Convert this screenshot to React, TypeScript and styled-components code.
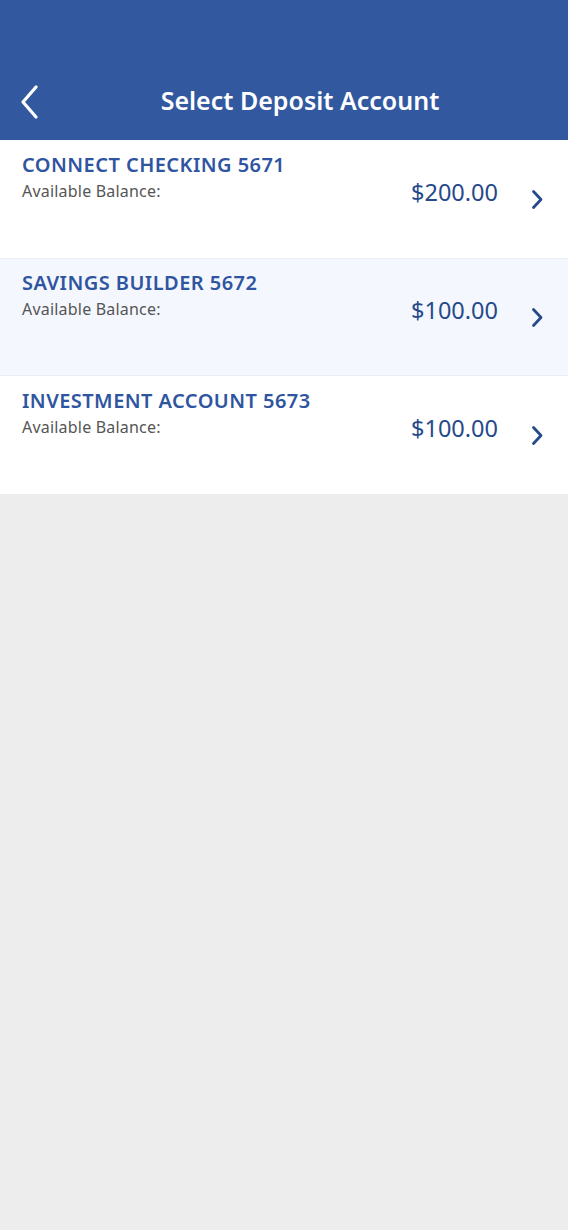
import styled, { createGlobalStyle } from 'styled-components';

const GlobalStyle = createGlobalStyle`
  html, body {
    margin: 0;
    padding: 0;
    background: #ededed;
    font-family: "Noto Sans", "Open Sans", sans-serif;
  }
`;

const Page = styled.div`
  min-height: 1230px;
  background: #ededed;
`;

const Header = styled.header`
  height: 140px;
  background: #3259a0;
  display: flex;
  align-items: flex-end;
  justify-content: center;
  position: relative;
  box-sizing: border-box;
  padding: 0 0 24px 32px;
`;

const BackButton = styled.button`
  position: absolute;
  left: 14px;
  bottom: 18px;
  width: 32px;
  height: 40px;
  background: none;
  border: none;
  padding: 0;
  display: flex;
  align-items: center;
  justify-content: center;
  cursor: pointer;
`;

const Title = styled.h1`
  margin: 0;
  color: #ffffff;
  font-size: 25px;
  font-weight: 600;
  line-height: 32px;
`;

const List = styled.ul`
  list-style: none;
  margin: 0;
  padding: 0;
`;

const Row = styled.li<{ $shaded: boolean }>`
  height: 118px;
  box-sizing: border-box;
  background: ${(p) => (p.$shaded ? '#f4f8fe' : '#ffffff')};
  border-top: 1px solid ${(p) => (p.$shaded ? '#eaeef4' : 'transparent')};
  border-bottom: 1px solid ${(p) => (p.$shaded ? '#eaeef4' : 'transparent')};
  display: flex;
  align-items: flex-start;
  padding: 10px 24px 0 22px;
  cursor: pointer;
`;

const Info = styled.div`
  flex: 1;
  display: flex;
  flex-direction: column;
`;

const Name = styled.div`
  color: #2f55a0;
  font-size: 20px;
  font-weight: 600;
  letter-spacing: 0.45px;
  line-height: 28px;
`;

const Label = styled.div`
  color: #555555;
  font-size: 16px;
  font-weight: 400;
  letter-spacing: 0.2px;
  line-height: 20px;
  margin-top: 2px;
`;

const Amount = styled.div`
  color: #26498a;
  font-size: 23.5px;
  line-height: 30px;
  margin-top: 26px;
`;

const Chevron = styled.span`
  display: flex;
  margin: 38px 0 0 33px;
`;

const accounts = [
  { name: 'CONNECT CHECKING 5671', balance: '$200.00' },
  { name: 'SAVINGS BUILDER 5672', balance: '$100.00' },
  { name: 'INVESTMENT ACCOUNT 5673', balance: '$100.00' },
];

export default function App() {
  return (
    <Page>
      <GlobalStyle />
      <Header>
        <BackButton aria-label="Back">
          <svg width="20" height="34" viewBox="0 0 20 34">
            <path d="M16 2 L3 17 L16 32" fill="none" stroke="#ffffff" strokeWidth="3.2" strokeLinecap="round" strokeLinejoin="round" />
          </svg>
        </BackButton>
        <Title>Select Deposit Account</Title>
      </Header>
      <List>
        {accounts.map((a, i) => (
          <Row key={a.name} $shaded={i === 1}>
            <Info>
              <Name>{a.name}</Name>
              <Label>Available Balance:</Label>
            </Info>
            <Amount>{a.balance}</Amount>
            <Chevron>
              <svg width="13" height="21" viewBox="0 0 13 21">
                <path d="M2.5 2.5 L10 10.5 L2.5 18.5" fill="none" stroke="#26498a" strokeWidth="2.8" strokeLinecap="round" strokeLinejoin="round" />
              </svg>
            </Chevron>
          </Row>
        ))}
      </List>
    </Page>
  );
}
